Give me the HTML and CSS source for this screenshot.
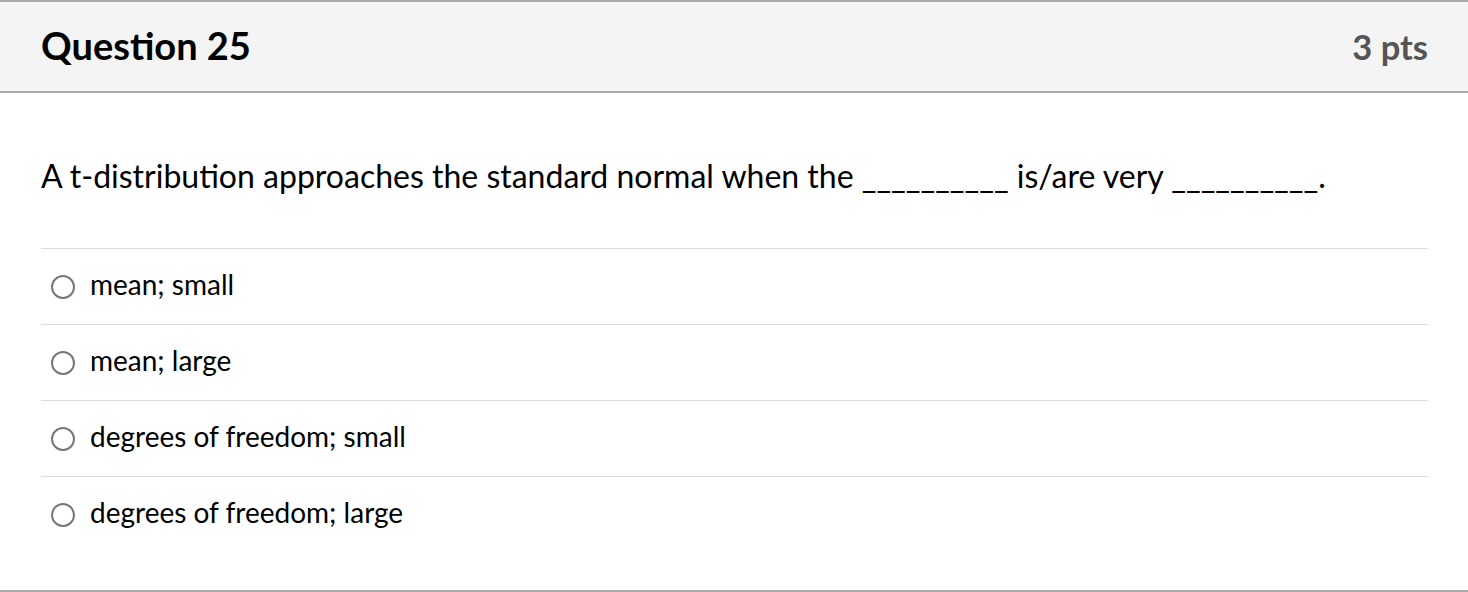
FILE: index.html
```html
<!DOCTYPE html>
<html>
<head>
<meta charset="utf-8">
<link rel="stylesheet" href="styles.css">
</head>
<body>
<div class="question">
  <div class="header">
    <h2 class="title">Question 25</h2>
    <span class="pts">3 pts</span>
  </div>
  <div class="content">
    <p class="text">A t-distribution approaches the standard normal when the __________ is/are very __________.</p>
    <div class="answers">
      <label class="answer"><span class="radio"></span><span class="label">mean; small</span></label>
      <label class="answer"><span class="radio"></span><span class="label">mean; large</span></label>
      <label class="answer"><span class="radio"></span><span class="label">degrees of freedom; small</span></label>
      <label class="answer"><span class="radio"></span><span class="label">degrees of freedom; large</span></label>
    </div>
  </div>
</div>
</body>
</html>
```
FILE: styles.css
```css
html, body {
  margin: 0;
  padding: 0;
  background: #fff;
}
body {
  font-family: Lato, "Liberation Sans", sans-serif;
  color: #000;
}
.question {
  border-top: 2px solid #aaa;
  border-bottom: 2px solid #aaa;
  height: 592px;
  box-sizing: border-box;
}
.header {
  display: flex;
  justify-content: space-between;
  align-items: center;
  height: 89px;
  background: #f4f4f4;
  border-bottom: 2px solid #aaa;
  padding: 0 40px 0 41px;
}
.title {
  margin: 0 0 4px;
  font-size: 38px;
  font-weight: 700;
}
.pts {
  font-size: 34.5px;
  font-weight: 700;
  color: #555;
}
.content {
  padding: 0 40px 0 41px;
}
.text {
  margin: 0;
  padding-top: 63px;
  font-size: 32px;
  line-height: 40px;
}
.answers {
  margin-top: 52px;
}
.answer {
  display: flex;
  align-items: center;
  height: 75px;
  border-top: 1px solid #ddd;
}
.radio {
  width: 24px;
  height: 24px;
  border: 2px solid #777;
  border-radius: 50%;
  margin-left: 10px;
  margin-right: 15px;
  box-sizing: border-box;
}
.label {
  font-size: 28px;
  margin-bottom: 5px;
}
```
